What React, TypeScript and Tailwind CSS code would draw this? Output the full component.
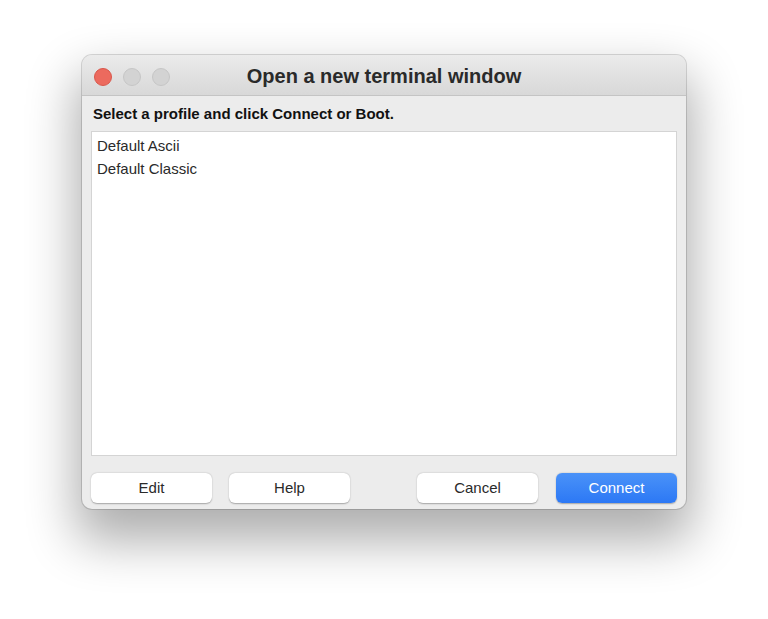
import React from "react";

export default function App() {
  const font = { fontFamily: '"Liberation Sans", Arial, Helvetica, sans-serif' };
  return (
    <div className="w-[768px] h-[619px] bg-white pl-[82px] pt-[55px]" style={font}>
      <div className="w-[604px] h-[454px] rounded-[10px] bg-[#ececec] flex flex-col overflow-hidden shadow-[0_0_0_1px_rgba(0,0,0,0.14),0_26px_50px_6px_rgba(0,0,0,0.32)]">
        <div className="relative h-[41px] shrink-0 bg-gradient-to-b from-[#ebebeb] to-[#d8d8d8] border-b border-[#c4c4c4] flex items-center">
          <div className="absolute left-[12px] top-[13px] flex gap-[11px]">
            <div className="w-[18px] h-[18px] rounded-full bg-[#ec6a5e] border border-[#d9574b]" />
            <div className="w-[18px] h-[18px] rounded-full bg-[#d3d3d3] border border-[#c6c6c6]" />
            <div className="w-[18px] h-[18px] rounded-full bg-[#d3d3d3] border border-[#c6c6c6]" />
          </div>
          <div className="w-full text-center text-[20px] font-bold text-[#2a2a2a] pt-[1px]">
            Open a new terminal window
          </div>
        </div>
        <div className="flex-1 flex flex-col px-[9px]">
          <div className="h-[35px] flex items-center pl-[2px] pt-[1px] text-[15px] font-bold text-[#111]">
            Select a profile and click Connect or Boot.
          </div>
          <div className="h-[325px] bg-white border border-[#d4d4d4] pt-[3px] pl-[5px] text-[15px] text-[#2a2a2a]">
            <div className="h-[23px] flex items-center">Default Ascii</div>
            <div className="h-[23px] flex items-center">Default Classic</div>
          </div>
          <div className="flex mt-[17px] h-[31px]">
            <button className="w-[121px] h-[30px] pt-[1px] rounded-[6px] bg-white text-[15px] text-[#2a2a2a] shadow-[0_0.5px_1.5px_rgba(0,0,0,0.3)]">
              Edit
            </button>
            <button className="ml-[17px] w-[121px] h-[30px] pt-[1px] rounded-[6px] bg-white text-[15px] text-[#2a2a2a] shadow-[0_0.5px_1.5px_rgba(0,0,0,0.3)]">
              Help
            </button>
            <button className="ml-[67px] w-[121px] h-[30px] pt-[1px] rounded-[6px] bg-white text-[15px] text-[#2a2a2a] shadow-[0_0.5px_1.5px_rgba(0,0,0,0.3)]">
              Cancel
            </button>
            <button className="ml-[18px] w-[121px] h-[30px] pt-[1px] rounded-[6px] bg-gradient-to-b from-[#4a92f8] to-[#2c78f5] text-[15px] text-white shadow-[0_0.5px_1.5px_rgba(0,0,0,0.3)]">
              Connect
            </button>
          </div>
        </div>
      </div>
    </div>
  );
}
